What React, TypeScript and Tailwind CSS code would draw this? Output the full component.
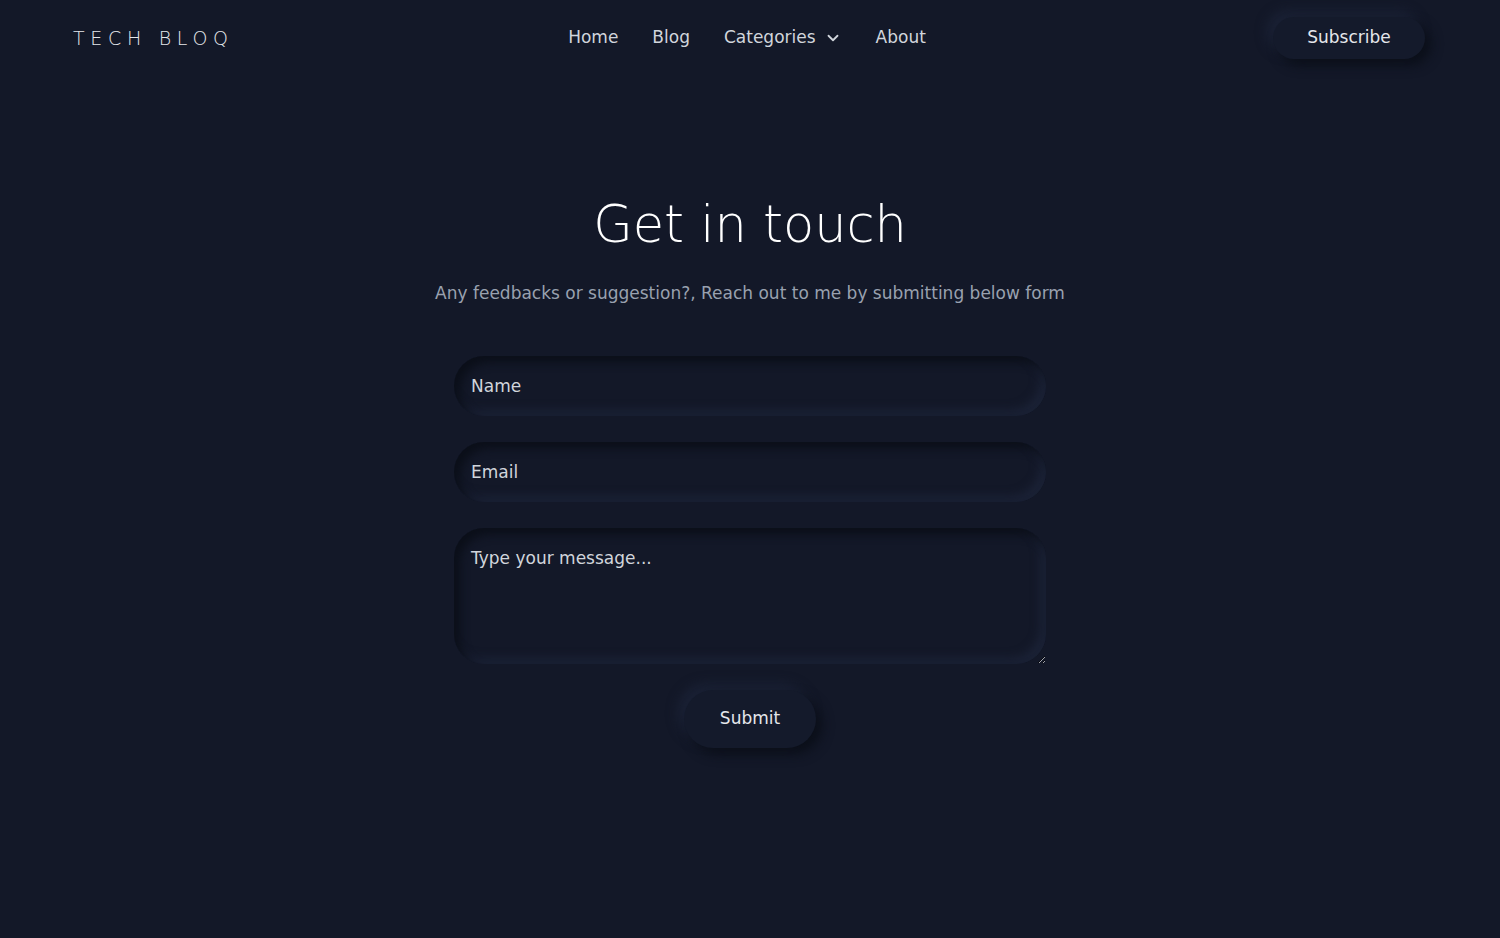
import { ChevronDown } from "lucide-react"

const navLinks = ["Home", "Blog", "Categories", "About"]

const inset =
  "shadow-[inset_6px_6px_10px_#0b0f19,inset_-6px_-6px_10px_#1b2236] bg-[#131828]"

const raised =
  "shadow-[6px_6px_12px_#0b0f19,-6px_-6px_12px_#1b2236] bg-[#141a2b]"

export default function App() {
  return (
    <div className="min-h-[938px] w-full bg-[#131828] text-gray-200 font-['DejaVu_Sans',sans-serif]">
      {/* Header */}
      <header className="flex items-center justify-between pl-[73px] pr-[75px] h-[75px] pt-[1px]">
        <div className="w-[300px] text-[19px] tracking-[0.3em] text-gray-200 font-light">TECH BLOQ</div>
        <nav className="flex items-center gap-[34px] text-[17px] text-gray-300 -ml-[4px]">
          {navLinks.map((l) =>
            l === "Categories" ? (
              <span key={l} className="flex items-center gap-2">
                {l}
                <ChevronDown size={18} strokeWidth={2.4} />
              </span>
            ) : (
              <span key={l}>{l}</span>
            )
          )}
        </nav>
        <div className="w-[300px] flex justify-end">
          <button className={`${raised} h-[42px] w-[152px] rounded-full text-[17px] text-gray-200`}>
            Subscribe
          </button>
        </div>
      </header>

      {/* Contact */}
      <main className="flex flex-col items-center pt-[124px]">
        <h1 className="text-[51px] font-extralight text-white leading-none">Get in touch</h1>
        <p className="mt-[31px] text-[17px] text-gray-400">
          Any feedbacks or suggestion?, Reach out to me by submitting below form
        </p>

        <form className="mt-[49px] w-[592px] flex flex-col gap-[26px]">
          <input
            readOnly
            placeholder="Name"
            className={`${inset} h-[60px] rounded-full px-[17px] text-[17px] outline-none placeholder:text-gray-300`}
          />
          <input
            readOnly
            placeholder="Email"
            className={`${inset} h-[60px] rounded-full px-[17px] text-[17px] outline-none placeholder:text-gray-300`}
          />
          <textarea
            readOnly
            placeholder="Type your message..."
            className={`${inset} h-[136px] rounded-[30px] px-[17px] py-[18px] text-[17px] outline-none placeholder:text-gray-300`}
          />
          <div className="flex justify-center">
            <button type="button" className={`${raised} h-[58px] w-[132px] rounded-full text-[17px] text-gray-200`}>
              Submit
            </button>
          </div>
        </form>
      </main>
    </div>
  )
}
